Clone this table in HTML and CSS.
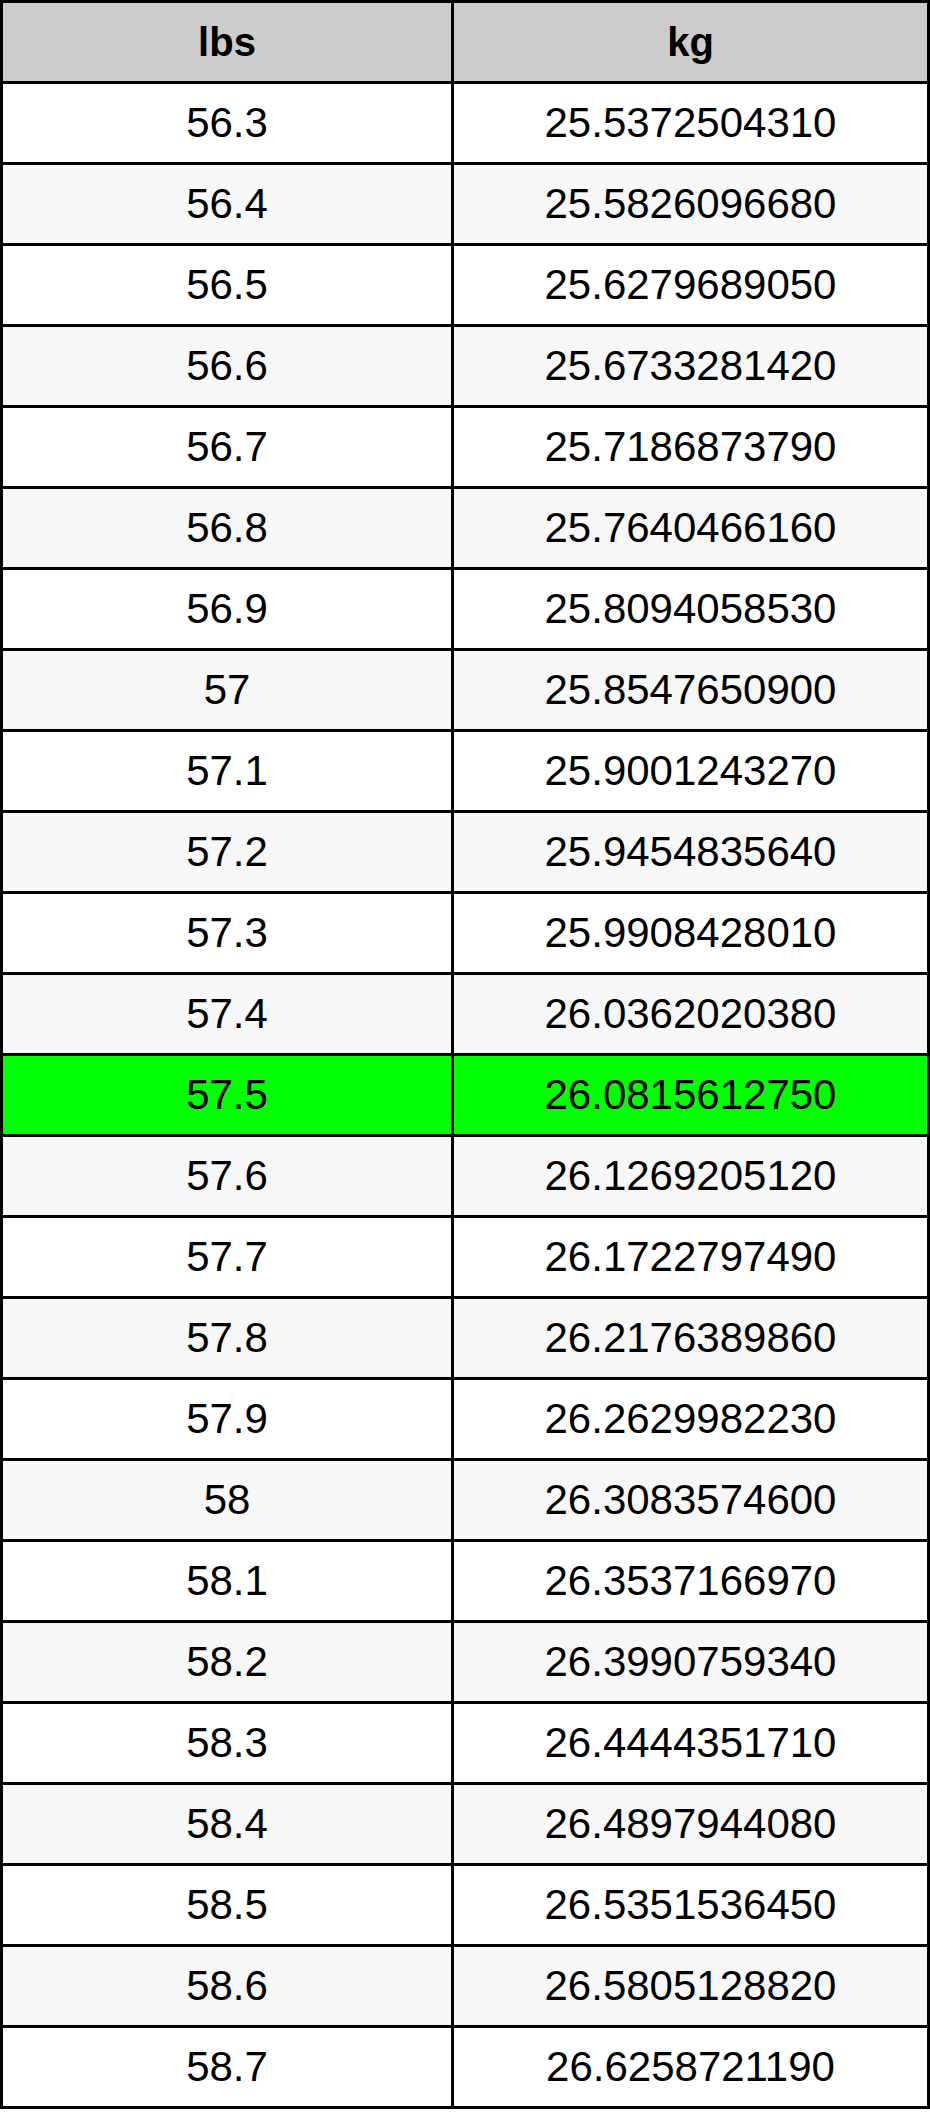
FILE: index.html
```html
<!DOCTYPE html>
<html>
<head>
<meta charset="utf-8">
<link rel="stylesheet" href="styles.css">
</head>
<body>
<table class="conv">
<colgroup><col class="c1"><col class="c2"></colgroup>
<thead>
<tr><th>lbs</th><th>kg</th></tr>
</thead>
<tbody>
<tr><td>56.3</td><td>25.5372504310</td></tr>
<tr><td>56.4</td><td>25.5826096680</td></tr>
<tr><td>56.5</td><td>25.6279689050</td></tr>
<tr><td>56.6</td><td>25.6733281420</td></tr>
<tr><td>56.7</td><td>25.7186873790</td></tr>
<tr><td>56.8</td><td>25.7640466160</td></tr>
<tr><td>56.9</td><td>25.8094058530</td></tr>
<tr><td>57</td><td>25.8547650900</td></tr>
<tr><td>57.1</td><td>25.9001243270</td></tr>
<tr><td>57.2</td><td>25.9454835640</td></tr>
<tr><td>57.3</td><td>25.9908428010</td></tr>
<tr><td>57.4</td><td>26.0362020380</td></tr>
<tr class="hl"><td>57.5</td><td>26.0815612750</td></tr>
<tr><td>57.6</td><td>26.1269205120</td></tr>
<tr><td>57.7</td><td>26.1722797490</td></tr>
<tr><td>57.8</td><td>26.2176389860</td></tr>
<tr><td>57.9</td><td>26.2629982230</td></tr>
<tr><td>58</td><td>26.3083574600</td></tr>
<tr><td>58.1</td><td>26.3537166970</td></tr>
<tr><td>58.2</td><td>26.3990759340</td></tr>
<tr><td>58.3</td><td>26.4444351710</td></tr>
<tr><td>58.4</td><td>26.4897944080</td></tr>
<tr><td>58.5</td><td>26.5351536450</td></tr>
<tr><td>58.6</td><td>26.5805128820</td></tr>
<tr><td>58.7</td><td>26.6258721190</td></tr>
</tbody>
</table>
</body>
</html>
```

FILE: styles.css
```css
html, body {
  margin: 0;
  padding: 0;
  background: #ffffff;
}

.conv {
  width: 930px;
  table-layout: fixed;
  border-collapse: separate;
  border-spacing: 3px;
  background: #000000;
  font-family: "Liberation Sans", Arial, sans-serif;
  font-size: 42px;
  color: #000000;
}

.c1 { width: 448px; }
.c2 { width: 473px; }

.conv th,
.conv td {
  height: 78px;
  padding: 0;
  text-align: center;
  vertical-align: middle;
  line-height: 1;
}

.conv th {
  background: #cccccc;
  font-weight: bold;
  font-size: 40px;
}

.conv tbody tr td {
  background: #ffffff;
}

.conv tbody tr:nth-child(even) td {
  background: #f7f7f7;
}

.conv tbody tr.hl td {
  background: #00ff00;
}
```
